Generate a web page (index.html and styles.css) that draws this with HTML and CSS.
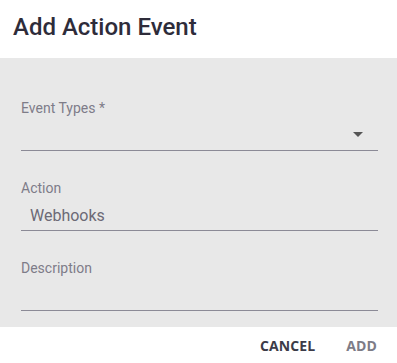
FILE: index.html
```html
<!DOCTYPE html>
<html lang="en">
<head>
    <meta charset="UTF-8">
    <meta name="viewport" content="width=device-width, initial-scale=1.0">
    <title>Add Action Event</title>
    <link rel="stylesheet" href="styles.css">
</head>
<body>
    <div class="dialog">
        <div class="dialog-title">Add Action Event</div>

        <div class="dialog-content">
            <div class="field">
                <label class="field-label">Event Types *</label>
                <div class="field-input select">
                    <span class="select-arrow"></span>
                </div>
            </div>
            <div class="field">
                <label class="field-label">Action</label>
                <div class="field-input">
                    <span class="field-value">Webhooks</span>
                </div>
            </div>
            <div class="field">
                <label class="field-label">Description</label>
                <div class="field-input"></div>
            </div>
        </div>

        <div class="dialog-actions">
            <button class="btn">Cancel</button>
            <button class="btn btn-disabled">Add</button>
        </div>
    </div>
</body>
</html>
```

FILE: styles.css
```css
body {
    font-family: Roboto, 'Liberation Sans', sans-serif;
    margin: 0;
    background-color: #fff;
}
.dialog {
    width: 397px;
    height: 363px;
    display: flex;
    flex-direction: column;
}
.dialog-title {
    height: 58px;
    padding: 13px 0 0 13px;
    box-sizing: border-box;
    font-size: 24px;
    font-weight: 500;
    line-height: 28px;
    color: #2e2c3a;
}
.dialog-content {
    background-color: #e8e8e8;
    padding: 42px 19px 16px 21px;
    display: flex;
    flex-direction: column;
    gap: 29px;
}
.field-label {
    display: block;
    font-size: 14px;
    line-height: 16px;
    color: #7e7c88;
}
.field-input {
    height: 34px;
    border-bottom: 1px solid #8b8a96;
    display: flex;
    align-items: flex-end;
    justify-content: space-between;
}
.field-value {
    padding: 0 0 5px 9px;
    font-size: 16px;
    line-height: 19px;
    color: #6c6a76;
}
.select {
    align-items: center;
    justify-content: flex-end;
}
.select-arrow {
    width: 0;
    height: 0;
    margin: 3px 15px 0 0;
    border-left: 5px solid transparent;
    border-right: 5px solid transparent;
    border-top: 5px solid #555;
}
.dialog-actions {
    flex: 1;
    display: flex;
    justify-content: flex-end;
    align-items: center;
    gap: 15px;
    padding-right: 12px;
}
.btn {
    background: none;
    border: none;
    padding: 4px 8px;
    font-family: 'Open Sans', sans-serif;
    font-size: 14px;
    font-weight: 700;
    letter-spacing: 0.1px;
    text-transform: uppercase;
    color: #3c3b48;
    cursor: pointer;
}
.btn-disabled {
    color: #7d7c87;
    cursor: default;
}
```
